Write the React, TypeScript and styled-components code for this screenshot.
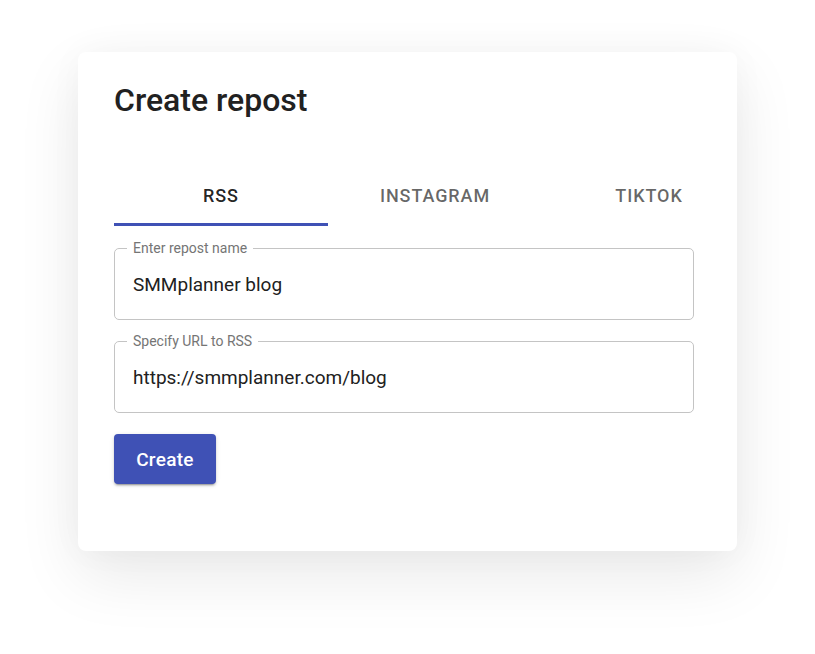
import styled, { createGlobalStyle } from "styled-components";

const GlobalStyle = createGlobalStyle`
  html, body {
    margin: 0;
    padding: 0;
    background: #ffffff;
    font-family: Roboto, "Liberation Sans", Arial, sans-serif;
  }
`;

const Page = styled.div`
  min-height: 654px;
  box-sizing: border-box;
  padding: 52px 0 0 78px;
`;

const Card = styled.div`
  width: 659px;
  box-sizing: border-box;
  padding: 30px 43px 67px 36px;
  background: #ffffff;
  border-radius: 8px;
  box-shadow: 0 24px 64px rgba(0, 0, 0, 0.09), 0 0 36px rgba(0, 0, 0, 0.03);
`;

const Title = styled.h1`
  margin: 0;
  font-size: 32px;
  line-height: 37px;
  font-weight: 500;
  color: #212121;
`;

const TabRow = styled.div`
  display: flex;
  margin-top: 49px;
`;

const Tab = styled.div<{ $active?: boolean }>`
  flex: 0 0 214px;
  height: 58px;
  box-sizing: border-box;
  display: flex;
  align-items: center;
  justify-content: center;
  font-size: 18px;
  font-weight: 500;
  letter-spacing: 0.9px;
  text-transform: uppercase;
  color: ${(p) => (p.$active ? "rgba(0, 0, 0, 0.87)" : "rgba(0, 0, 0, 0.6)")};
  border-bottom: 3px solid ${(p) => (p.$active ? "#3f51b5" : "transparent")};
  cursor: pointer;
`;

const Form = styled.div`
  display: flex;
  flex-direction: column;
  gap: 13px;
  margin-top: 14px;
`;

const Field = styled.fieldset`
  margin: 0;
  padding: 0 18px 22px;
  border: 1px solid #c4c4c4;
  border-radius: 5px;
  min-width: 0;
`;

const Label = styled.legend`
  margin-left: -6px;
  padding: 0 6px;
  font-size: 14px;
  line-height: 16px;
  color: #757575;
`;

const Value = styled.div`
  margin-top: 17px;
  font-size: 19px;
  line-height: 24px;
  color: #212121;
`;

const Button = styled.button`
  align-self: flex-start;
  margin-top: 8px;
  width: 102px;
  height: 50px;
  border: none;
  border-radius: 4px;
  background: #3f51b5;
  color: #ffffff;
  font-family: inherit;
  font-size: 19px;
  font-weight: 500;
  letter-spacing: 0.3px;
  cursor: pointer;
  box-shadow: 0 3px 1px -2px rgba(0, 0, 0, 0.2), 0 2px 2px rgba(0, 0, 0, 0.14),
    0 1px 5px rgba(0, 0, 0, 0.12);
`;

export default function App() {
  return (
    <Page>
      <GlobalStyle />
      <Card>
        <Title>Create repost</Title>
        <TabRow>
          <Tab $active>RSS</Tab>
          <Tab>Instagram</Tab>
          <Tab>TikTok</Tab>
        </TabRow>
        <Form>
          <Field>
            <Label>Enter repost name</Label>
            <Value>SMMplanner blog</Value>
          </Field>
          <Field>
            <Label>Specify URL to RSS</Label>
            <Value>https://smmplanner.com/blog</Value>
          </Field>
          <Button>Create</Button>
        </Form>
      </Card>
    </Page>
  );
}
